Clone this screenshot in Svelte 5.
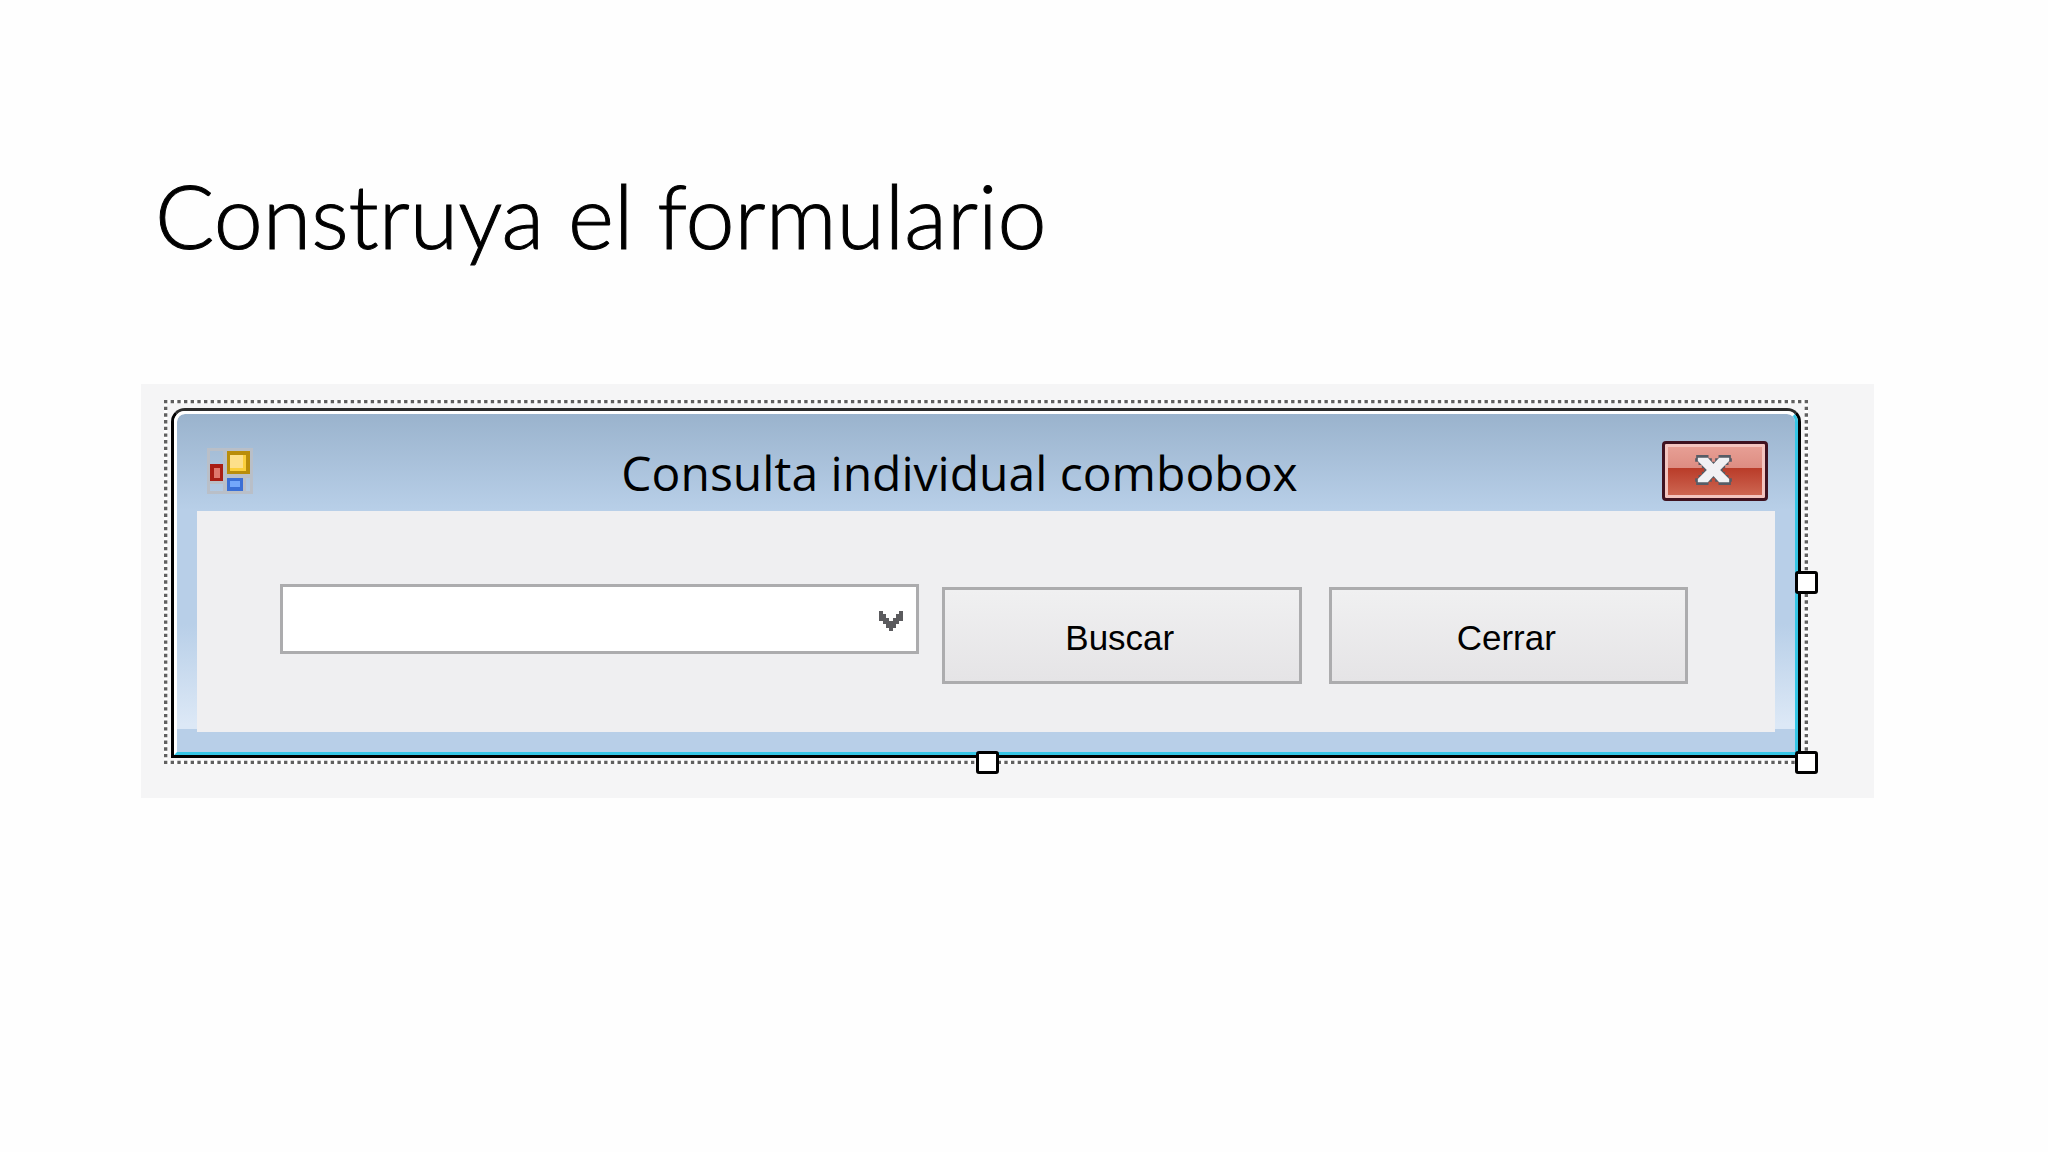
<script>
  let selected = $state('');
</script>

<main>
  <h1>Construya el formulario</h1>

  <section class="designer">
    <div class="selection">
      <svg class="dots" viewBox="0 0 493 109" preserveAspectRatio="none" aria-hidden="true">
        <rect x="0.5" y="0.5" width="492" height="108" fill="none" stroke="#fff" />
        <path d="M0 .5H493M0 108.5H493M.5 2V108M492.5 2V108" stroke="#606060" stroke-dasharray="1 1" />
      </svg>

      <div class="window">
        <div class="frame">
          <header>
            <svg class="app-icon" viewBox="0 0 14 14" shape-rendering="crispEdges" aria-hidden="true">
              <path d="M.5.5H13.5V13.5H.5zM5.5 .5V13.5M.5 10.5H5M6 8.5H13M11.5 9V13" fill="none" stroke="#b9bfc8" stroke-width="1" />
              <rect x="1" y="5" width="4" height="5" fill="#a91d14" />
              <rect x="2" y="6" width="2" height="3" fill="#e0776c" />
              <rect x="6" y="1" width="7" height="7" fill="#b98d0a" />
              <rect x="7" y="2" width="5" height="5" fill="#fbcf3c" />
              <rect x="7" y="2" width="4" height="4" fill="#fde08a" />
              <rect x="6" y="9" width="5" height="4" fill="#3a6fd6" />
              <rect x="7" y="10" width="3" height="2" fill="#74a7fa" />
            </svg>
            <h2>Consulta individual combobox</h2>
            <button class="close" aria-label="Cerrar ventana">
              <svg viewBox="0 0 11 9" aria-hidden="true">
                <path fill="#565c66" d="M.3 0H4V1H5V2H6V1H7V0H10.700V1H11V2H10V3H9V4H8.300V5H9V6H10V7H11V8H10.700V9H7V8H6V7H5V8H4V9H.3V8H0V7H1V6H2V5H2.700V4H2V3H1V2H0V1H.3z" />
                <path fill="#f1f1f4" d="M.8 .8H3.800L5.500 2.700L7.200 .8H10.200V1.800L7.500 4.500L10.200 7.200V8.200H7.200L5.500 6.300L3.800 8.200H.8V7.200L3.500 4.500L.8 1.800z" />
              </svg>
            </button>
          </header>

          <form onsubmit={(e) => e.preventDefault()}>
            <div class="combo">
              <select aria-label="Consulta" bind:value={selected}>
                <option value=""></option>
              </select>
              <svg viewBox="0 0 7 6" shape-rendering="crispEdges" aria-hidden="true">
                <path fill="#5b5b5e" d="M0 0H1V1H2V2H3V3H4V2H5V1H6V0H7V3H6V4H5V5H4V6H3V5H2V4H1V3H0z" />
              </svg>
            </div>
            <div class="actions">
              <button type="submit">Buscar</button>
              <button type="button">Cerrar</button>
            </div>
          </form>
        </div>
      </div>

      <span class="handle right"></span>
      <span class="handle bottom"></span>
      <span class="handle corner"></span>
    </div>
  </section>
</main>

<style>
  :global(body) {
    margin: 0;
    background: #fefefe;
  }

  main {
    padding: 164px 174px 0 141px;
    font-family: 'Liberation Sans', Arial, sans-serif;
    color: #000;
  }

  h1 {
    margin: 0 0 118px;
    padding-left: 14px;
    font: 300 88px/102px Lato, 'Open Sans', sans-serif;
    -webkit-text-stroke: 1px #000;
  }

  .designer {
    padding: 16px 66px 34px 23px;
    background: #f5f5f6;
  }

  .selection {
    position: relative;
    padding: 8px 7px 6px 7px;
  }

  .dots {
    position: absolute;
    inset: 0;
    width: 100%;
    height: 100%;
  }

  .window {
    position: relative;
    border: 3px solid #000;
    border-top-color: #2a2a2a;
    border-radius: 14px 14px 0 0;
    background: #fff;
  }

  .frame {
    padding: 0 20px 20px;
    border: 3px solid #35c6e6;
    border-top-color: #fff;
    border-left-color: #fff;
    border-radius: 11px 11px 0 0;
    background:
      linear-gradient(#b8cfe8, #b8cfe8) bottom / 100% 23px no-repeat,
      linear-gradient(#9ab3cd, #b8cfe8 96px, #b8cfe8 210px, #dce8f6 310px);
    background-clip: padding-box;
  }

  header {
    display: flex;
    align-items: center;
    height: 97px;
    padding: 0 7px 0 10px;
  }

  .app-icon {
    width: 46px;
    height: 46px;
    margin-top: 16px;
  }

  h2 {
    flex: 1;
    margin: 0;
    padding: 20px 0 0 4px;
    font: 400 48px/60px 'Open Sans', 'Noto Sans', sans-serif;
    text-align: center;
  }

  .close {
    display: grid;
    place-items: center;
    width: 106px;
    height: 60px;
    margin-top: 17px;
    padding: 0 4px 3px 0;
    border: 3px solid #3f1220;
    border-radius: 4px;
    box-shadow: inset 0 0 0 3px #f3c4bf;
    background: linear-gradient(#e8a197, #dd8d82 44%, #b93b28 44%, #cf6a56);
  }

  .close svg {
    width: 37px;
    height: 30px;
  }

  form {
    display: grid;
    grid-template-columns: 639fr 746fr;
    align-items: start;
    gap: 23px;
    padding: 73px 87px 48px 83px;
    background: #efeff1;
  }

  .combo {
    position: relative;
  }

  select {
    display: block;
    width: 100%;
    height: 70px;
    padding: 0 60px 0 12px;
    border: 3px solid #acacae;
    border-radius: 0;
    background: #fff;
    font: 35px 'Liberation Sans', Arial, sans-serif;
    appearance: none;
  }

  .combo svg {
    position: absolute;
    top: 27px;
    right: 16px;
    width: 24px;
    height: 20px;
    pointer-events: none;
  }

  .actions {
    display: flex;
    gap: 27px;
    padding-top: 3px;
  }

  .actions button {
    flex: 1;
    height: 97px;
    padding: 4px 4px 0 0;
    border: 3px solid #acacae;
    border-radius: 0;
    background: linear-gradient(#f0f0f1, #e5e4e6);
    color: #000;
    font: 35px 'Liberation Sans', Arial, sans-serif;
  }

  .handle {
    position: absolute;
    width: 17px;
    height: 17px;
    border: 3px solid #000;
    border-radius: 3px;
    background: #fff;
  }

  .right {
    top: 171px;
    right: -10px;
  }

  .bottom {
    bottom: -10px;
    left: 50%;
    margin-left: -10px;
  }

  .corner {
    right: -10px;
    bottom: -10px;
  }
</style>
